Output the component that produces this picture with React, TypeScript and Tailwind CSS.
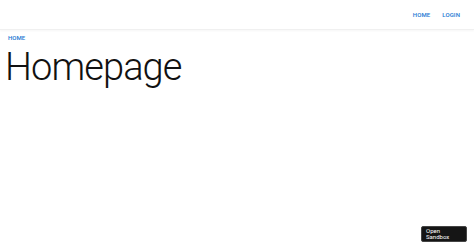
import React from 'react';

const navItems = ['Home', 'Login'];

export default function App() {
  return (
    <div className="relative h-[248px] w-[474px] bg-white font-['Roboto',sans-serif]">
      {/* App bar */}
      <header className="flex h-[30px] items-center justify-end border-b border-[#f0f0f0] pr-[8px] shadow-[0_1px_2px_rgba(0,0,0,0.04)]">
        {navItems.map((label) => (
          <button
            key={label}
            className="px-[6px] pt-[3px] pb-[4px] text-[6px] font-medium uppercase tracking-[0.1px] text-[#1976d2]"
          >
            {label}
          </button>
        ))}
      </header>

      {/* Breadcrumb */}
      <div className="px-[8px] pt-[3px] text-[6px] font-medium uppercase leading-[9px] text-[#1976d2]">Home</div>

      <h1 className="pl-[5px] pt-[3px] text-[38px] font-light leading-[44px] tracking-[-0.9px] text-[#111]">Homepage</h1>

      {/* Sandbox badge */}
      <div className="absolute bottom-[6px] right-[7px] w-[46px] rounded-[2px] border border-[#444] bg-[#151515] px-[4px] py-[1px] text-[6px] leading-[6px] text-white">
        Open
        <br />
        Sandbox
      </div>
    </div>
  );
}
